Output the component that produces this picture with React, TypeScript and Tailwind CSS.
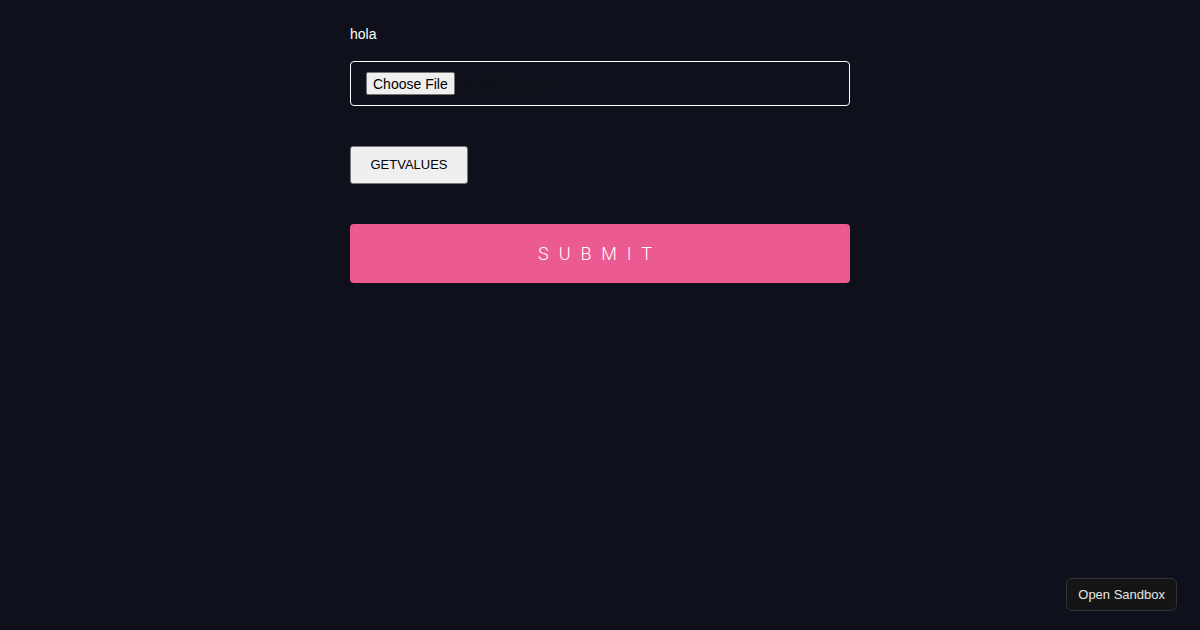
export default function App() {
  return (
    <div
      className="min-h-screen w-full bg-[#0e111b] text-white"
      style={{ fontFamily: '"Liberation Sans", Arial, sans-serif' }}
    >
      <form className="mx-auto flex w-[500px] flex-col pt-[24px]">
        <label className="text-[14px] leading-[20px] text-white">hola</label>
        <div className="mt-[17px] rounded-[4px] border border-white px-[15px] py-[10px]">
          <input
            type="file"
            className="block h-[23px] w-full text-[14px] leading-[23px] text-[#111] file:mr-[4px] file:h-[23px] file:rounded-[2px] file:border file:border-solid file:border-[#767676] file:bg-[#efefef] file:px-[6px] file:text-[14px] file:text-black"
          />
        </div>
        <div className="mt-[40px]">
          <button
            type="button"
            className="h-[38px] w-[118px] rounded-[3px] border border-[#767676] bg-[#efefef] text-[13px] text-black"
          >
            GETVALUES
          </button>
        </div>
        <button
          type="submit"
          className="mt-[40px] h-[59px] w-full rounded-[4px] bg-[#eb5a90] text-[18px] font-light tracking-[0.55em] text-white"
          style={{ fontFamily: 'Roboto, "Liberation Sans", sans-serif' }}
        >
          SUBMIT
        </button>
      </form>
      <button
        type="button"
        className="fixed bottom-[19px] right-[23px] h-[33px] rounded-[6px] border border-[#333] bg-[#151515] px-[11px] text-[13px] text-[#e5e5e5]"
      >
        Open Sandbox
      </button>
    </div>
  );
}
